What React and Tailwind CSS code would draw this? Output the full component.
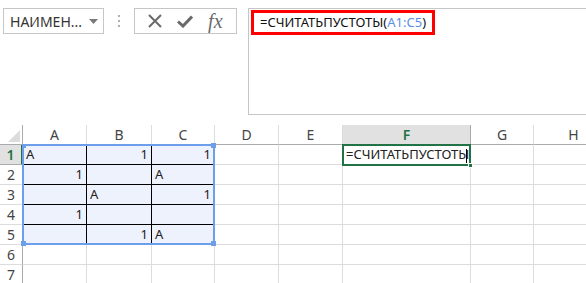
import React from "react";

const cols = [
  { key: "A", w: "w-[64px]" },
  { key: "B", w: "w-[65px]" },
  { key: "C", w: "w-[63px]" },
  { key: "D", w: "w-[64px]" },
  { key: "E", w: "w-[64px]" },
  { key: "F", w: "w-[128px]" },
  { key: "G", w: "w-[63px]" },
  { key: "H", w: "w-[80px]" },
];

// values of A1:C5, "r" = right aligned number
const data = [
  [{ t: "A" }, { t: "1", r: true }, { t: "1", r: true }],
  [{ t: "1", r: true }, { t: "" }, { t: "A" }],
  [{ t: "" }, { t: "A" }, { t: "1", r: true }],
  [{ t: "1", r: true }, { t: "" }, { t: "" }],
  [{ t: "" }, { t: "1", r: true }, { t: "A" }],
];

function Cell({ row, ci, col }) {
  const inRange = row < 5 && ci < 3;
  const cell = inRange ? data[row][ci] : null;
  const isF1 = row === 0 && col.key === "F";
  return (
    <div
      className={`${col.w} shrink-0 h-[20px] flex items-center px-[3px] border-r border-b ${
        inRange ? "bg-[#eef2fc] border-black" : "bg-white border-[#dadcdd]"
      } ${cell && cell.r ? "justify-end" : "justify-start"} ${
        ci === 2 && inRange ? "border-r-[#dadcdd]" : ""
      } ${row === 4 && inRange ? "border-b-[#dadcdd]" : ""}`}
    >
      {cell && <span className="leading-none">{cell.t}</span>}
      {isF1 && <span className="leading-none">=СЧИТАТЬПУСТОТЫ</span>}
    </div>
  );
}

export default function App() {
  return (
    <div className="w-[586px] h-[283px] overflow-hidden bg-white text-[13px] text-[#222] font-['Noto_Sans',sans-serif] relative">
      {/* formula bar area */}
      <div className="flex items-start h-[125px] pt-[8px]">
        <div className="ml-[3px] w-[101px] h-[26px] border border-[#c6c6c6] flex items-center pl-[6px] pr-[5px] justify-between">
          <span className="text-[14px] text-[#333]">НАИМЕН...</span>
          <svg width="9" height="5" viewBox="0 0 9 5">
            <path d="M0 0 L9 0 L4.5 5 Z" fill="#7a7a7a" />
          </svg>
        </div>
        <div className="w-[30px] h-[26px] flex flex-col items-center justify-center gap-[3px]">
          <span className="w-[2px] h-[2px] bg-[#b0b0b0]" />
          <span className="w-[2px] h-[2px] bg-[#b0b0b0]" />
          <span className="w-[2px] h-[2px] bg-[#b0b0b0]" />
        </div>
        <div className="w-[103px] h-[26px] border border-[#c6c6c6] flex items-center justify-around px-[6px]">
          <svg width="14" height="14" viewBox="0 0 14 14">
            <path d="M1 1 L13 13 M13 1 L1 13" stroke="#6a6a6a" strokeWidth="2" />
          </svg>
          <svg width="16" height="13" viewBox="0 0 16 13">
            <path d="M1 6.5 L6 11 L15 1.5" stroke="#6a6a6a" strokeWidth="3" fill="none" />
          </svg>
          <span className="font-['Liberation_Serif',serif] italic text-[20px] leading-none text-[#6a6a6a]">fx</span>
        </div>
        <div className="ml-[11px] flex-1 h-[107px] border border-r-0 border-[#c6c6c6] pl-[2px] pt-[1px]">
          <div className="inline-flex items-center h-[25px] w-[184px] border-[3px] border-[#ff0000] pl-[6px] text-[13px] text-[#111]">
            <span>=СЧИТАТЬПУСТОТЫ(</span>
            <span className="text-[#5b8ee6]">A1:C5</span>
            <span>)</span>
          </div>
        </div>
      </div>

      {/* sheet */}
      <div className="flex flex-col">
        <div className="flex h-[20px] text-[#444]">
          <div className="w-[23px] shrink-0 h-[20px] border-r border-b border-[#ababab] flex items-end justify-end p-[2px]">
            <svg width="12" height="12" viewBox="0 0 12 12">
              <path d="M12 0 L12 12 L0 12 Z" fill="#dcdcdc" />
            </svg>
          </div>
          {cols.map((c) => (
            <div
              key={c.key}
              className={`${c.w} shrink-0 h-[20px] border-b border-r flex items-center justify-center text-[14px] ${
                c.key === "F"
                  ? "bg-[#e1e1e1] text-[#217346] font-semibold border-b-[#217346] border-r-[#ababab]"
                  : "border-[#ababab] border-r-[#dadcdd]"
              }`}
            >
              {c.key}
            </div>
          ))}
        </div>
        {[0, 1, 2, 3, 4, 5, 6].map((row) => (
          <div key={row} className="flex h-[20px]">
            <div
              className={`w-[23px] shrink-0 h-[20px] border-b flex items-center justify-center text-[14px] ${
                row === 0
                  ? "bg-[#e1e1e1] text-[#217346] font-semibold border-r-2 border-r-[#217346] border-b-[#ababab]"
                  : "text-[#444] border-r border-[#ababab] border-b-[#dadcdd]"
              }`}
            >
              {row + 1}
            </div>
            {cols.map((c, ci) => (
              <Cell key={c.key} row={row} ci={ci} col={c} />
            ))}
          </div>
        ))}
      </div>

      {/* range selection A1:C5 */}
      <div className="absolute left-[22px] top-[144px] w-[193px] h-[101px] border-2 border-[#6d9eeb] pointer-events-none">
        <span className="absolute -left-[2px] -top-[2px] w-[4px] h-[4px] bg-[#6d9eeb]" />
        <span className="absolute -right-[3px] -top-[3px] w-[5px] h-[5px] bg-[#6d9eeb]" />
        <span className="absolute -left-[3px] -bottom-[3px] w-[5px] h-[5px] bg-[#6d9eeb]" />
        <span className="absolute -right-[3px] -bottom-[3px] w-[5px] h-[5px] bg-[#6d9eeb]" />
      </div>
      {/* active cell F1 */}
      <div className="absolute left-[342px] top-[144px] w-[129px] h-[22px] border-2 border-[#217346] pointer-events-none">
        <span className="absolute -right-[4px] -bottom-[4px] w-[5px] h-[5px] bg-[#217346] border border-white" />
        <span className="absolute right-[2px] top-[3px] w-[1px] h-[14px] bg-black" />
      </div>
    </div>
  );
}
